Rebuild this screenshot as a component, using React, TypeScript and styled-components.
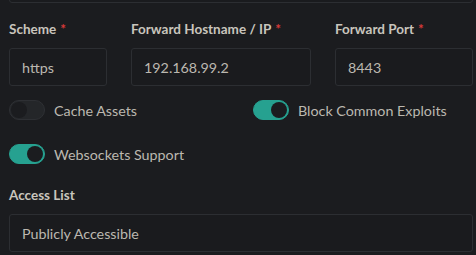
import React from "react";
import styled, { createGlobalStyle } from "styled-components";

const Global = createGlobalStyle`
  html, body { margin: 0; padding: 0; background: #1b1c1f; }
  body { font-family: "Source Sans Pro", Lato, "Noto Sans", sans-serif; }
  * { box-sizing: border-box; }
`;

const Form = styled.div`
  width: 464px;
  margin-left: 9px;
  display: flex;
  flex-direction: column;
`;

const PrevInput = styled.div`
  height: 38px;
  margin-top: -35px;
  border: 1px solid #2c2e32;
  border-radius: 3px;
  background: #1a1b1e;
`;

const FieldRow = styled.div`
  display: grid;
  grid-template-columns: 98fr 180fr 138fr;
  column-gap: 24px;
  margin-top: 16px;
`;

const Group = styled.div<{ $mt?: number }>`
  display: flex;
  flex-direction: column;
  margin-top: ${(p) => p.$mt ?? 0}px;
`;

const Label = styled.label`
  font-size: 13.5px;
  font-weight: 700;
  line-height: 21px;
  color: #c9c5bd;
  margin-bottom: 8px;
`;

const Req = styled.span`
  color: #d63939;
  margin-left: 4px;
`;

const Input = styled.div`
  height: 38px;
  border: 1px solid #2c2e32;
  border-radius: 3px;
  background: #1a1b1e;
  padding: 0 12px;
  display: flex;
  align-items: center;
  font-size: 14.3px;
  color: #bcb8b0;
`;

const SwitchGrid = styled.div`
  display: grid;
  grid-template-columns: 1fr 1fr;
  column-gap: 24px;
  row-gap: 24px;
  margin-top: 14px;
`;

const SwitchItem = styled.label`
  display: flex;
  align-items: center;
  gap: 9px;
  font-size: 14.3px;
  color: #bcb8b0;
  height: 20px;
`;

const Track = styled.span<{ $on: boolean }>`
  width: 36px;
  height: 20px;
  border-radius: 10px;
  flex: none;
  position: relative;
  background: ${(p) => (p.$on ? "#26a190" : "#242629")};
  border: 1px solid ${(p) => (p.$on ? "#26a190" : "#2e3034")};
`;

const Knob = styled.span<{ $on: boolean }>`
  position: absolute;
  top: 1px;
  left: ${(p) => (p.$on ? "17px" : "1px")};
  width: 16px;
  height: 16px;
  border-radius: 50%;
  background: #1b1c1f;
`;

const Switch = ({ on, label }: { on: boolean; label: string }) => (
  <SwitchItem>
    <Track $on={on}>
      <Knob $on={on} />
    </Track>
    {label}
  </SwitchItem>
);

export default function App() {
  return (
    <>
      <Global />
      <Form>
        <PrevInput />
        <FieldRow>
          <Group>
            <Label>
              Scheme<Req>*</Req>
            </Label>
            <Input>https</Input>
          </Group>
          <Group>
            <Label>
              Forward Hostname / IP<Req>*</Req>
            </Label>
            <Input>192.168.99.2</Input>
          </Group>
          <Group>
            <Label>
              Forward Port<Req>*</Req>
            </Label>
            <Input>8443</Input>
          </Group>
        </FieldRow>
        <SwitchGrid>
          <Switch on={false} label="Cache Assets" />
          <Switch on={true} label="Block Common Exploits" />
          <Switch on={true} label="Websockets Support" />
        </SwitchGrid>
        <Group $mt={21}>
          <Label>Access List</Label>
          <Input>Publicly Accessible</Input>
        </Group>
      </Form>
    </>
  );
}
